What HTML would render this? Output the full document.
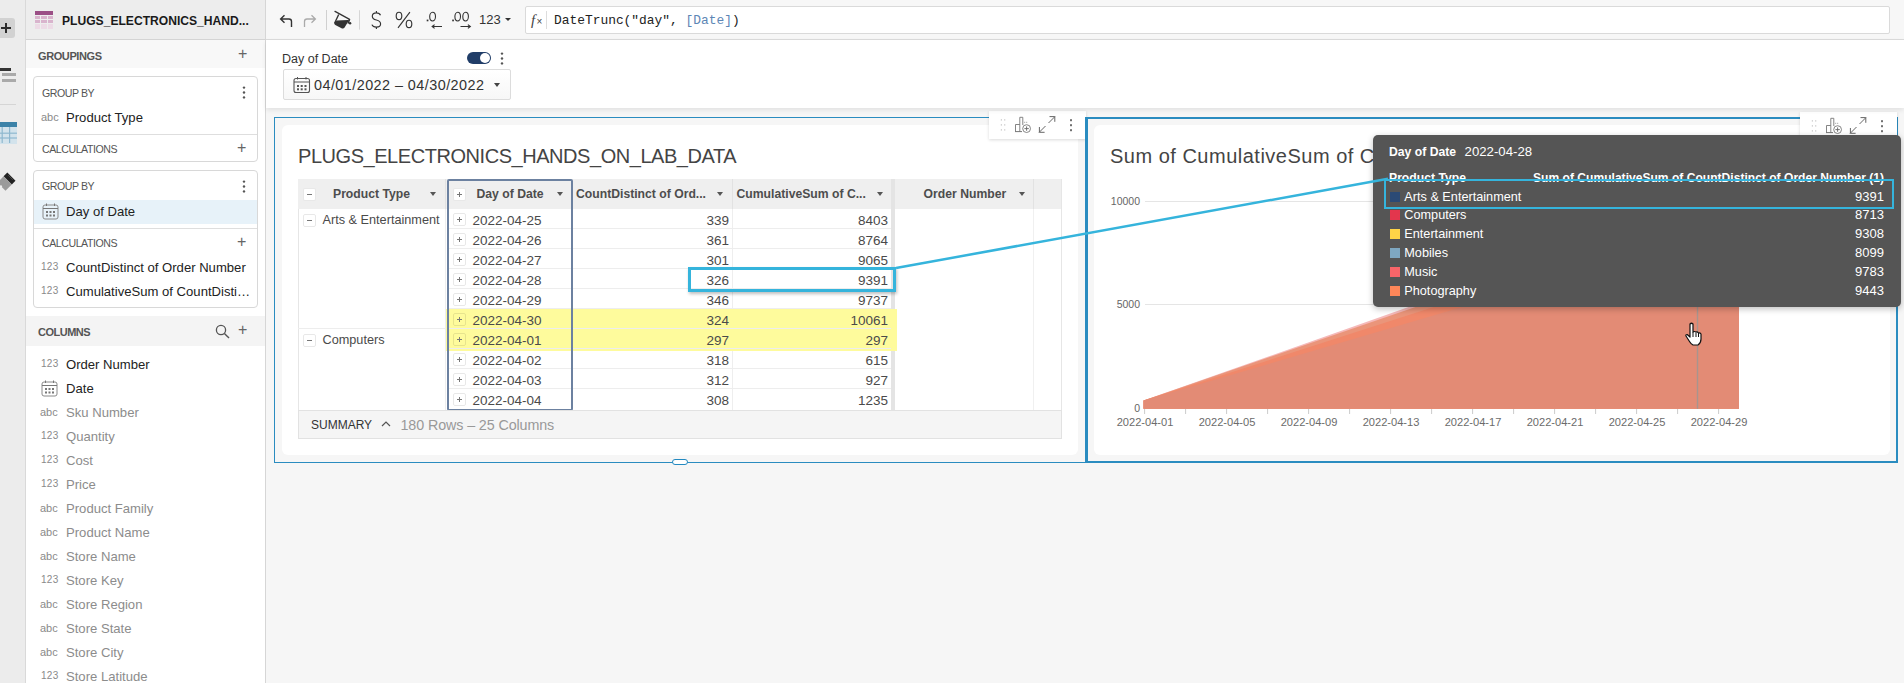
<!DOCTYPE html>
<html><head><meta charset="utf-8">
<style>
*{box-sizing:border-box;margin:0;padding:0}
html,body{width:1904px;height:683px;overflow:hidden;background:#f6f6f6;font-family:"Liberation Sans",sans-serif;color:#333}
.a{position:absolute;white-space:nowrap}
.t{position:absolute;white-space:nowrap;line-height:20px;height:20px}
#nav{position:absolute;left:0;top:0;width:26px;height:683px;background:#ececec;border-right:1px solid #d9d9d9}
#panel{position:absolute;left:26px;top:0;width:240px;height:683px;background:#fff;border-right:1px solid #d6d6d6}
#phead{position:absolute;left:0;top:0;width:239px;height:40px;background:#ededed;border-bottom:1px solid #d4d4d4}
.sechead{position:absolute;left:0;width:239px;background:#f8f8f8}
.card{position:absolute;left:7px;width:225px;border:1px solid #d8d8d8;border-radius:4px;background:#fff;overflow:hidden}
.lbl{font-size:10.6px;color:#555;letter-spacing:-0.45px}
.ptxt{font-size:13.1px;color:#222}
.ico123{font-size:10px;color:#8a8a8a;letter-spacing:0.3px}
.icoabc{font-size:11px;color:#8a8a8a}
.gray{color:#8c8c8c}
#main{position:absolute;left:266px;top:0;width:1638px;height:683px;background:#f6f6f6}
#tb{position:absolute;left:0;top:0;width:1638px;height:40px;background:#f7f7f7;border-bottom:1px solid #dcdcdc}
#ctl{position:absolute;left:0;top:40px;width:1638px;height:68px;background:#fff;box-shadow:0 2px 5px rgba(0,0,0,0.09)}

.kebab{width:3px;height:13px;background:radial-gradient(circle at 1.5px 1.5px,#555 1.2px,transparent 1.5px) 0 0/3px 5px repeat-y}
.cal{width:17px;height:17px}

.elb{position:absolute;background:#f6f6f6}
.card2{position:absolute;background:#fff;border-radius:6px}
.hdr{position:absolute;top:179px;height:30px;background:#efefef}
.htxt{font-size:12.2px;font-weight:bold;color:#4d4d4d}
.caret{position:absolute;width:0;height:0;border-left:3.5px solid transparent;border-right:3.5px solid transparent;border-top:4.5px solid #555;margin-left:0.5px}
.cell{font-size:13.5px;color:#4a4a4a}
.pbox{position:absolute;width:13px;height:13px;border:1px solid rgba(0,0,0,0.09);border-radius:2px;background:transparent}
.pbox:before{content:"";position:absolute;left:3px;top:5px;width:5px;height:1px;background:#777}
.pbox.p:after{content:"";position:absolute;left:5px;top:3px;width:1px;height:5px;background:#777}
.hl{position:absolute;height:1px;background:#ededed}
.vl{position:absolute;width:1px;background:#e6e6e6}
</style></head><body>
<div id="nav">
  <div class="a" style="left:-4px;top:18px;width:19px;height:20px;background:#d2d2d2;border-radius:3px"></div>
  <div class="a" style="left:1px;top:27px;width:10px;height:2px;background:#2b2b2b"></div>
  <div class="a" style="left:5px;top:23px;width:2px;height:10px;background:#2b2b2b"></div>
  <div class="a" style="left:0;top:68px;width:11px;height:3px;background:#333"></div>
  <div class="a" style="left:2px;top:73px;width:14px;height:3px;background:#aaa"></div>
  <div class="a" style="left:2px;top:79px;width:14px;height:3px;background:#aaa"></div>
  <div class="a" style="left:0;top:104px;width:16px;height:1px;background:#d5d5d5"></div>
  <svg class="a" style="left:0;top:122px" width="17" height="22" viewBox="0 0 17 22">
    <rect x="0" y="0" width="17" height="22" fill="#d3e3ec"/>
    <rect x="0" y="0" width="17" height="5" fill="#3b82a8"/>
    <rect x="1.6" y="5" width="1.2" height="16" fill="#8fb8cf"/><rect x="9" y="5" width="1.2" height="16" fill="#8fb8cf"/>
    <rect x="0" y="10.6" width="17" height="1.2" fill="#8fb8cf"/><rect x="0" y="15.4" width="17" height="1.2" fill="#8fb8cf"/>
  </svg>
  <svg class="a" style="left:0;top:170px" width="17" height="22" viewBox="0 0 17 22">
    <path d="M7.3 2.6 L15.5 10.8 L11.8 14.5 L3.6 6.3 Z" fill="#222"/>
    <path d="M8.2 5.2 L12.8 9.8" stroke="#555" stroke-width="0.8"/>
    <path d="M3.6 6.3 L11.8 14.5 L5.5 20.8 L-2.7 12.6 Z" fill="#9a9a9a"/>
    <circle cx="0.8" cy="16.6" r="1.3" fill="#ececec"/>
  </svg>
</div>
<div id="panel">
  <div id="phead">
    <svg class="a" style="left:9px;top:11px" width="18" height="18" viewBox="0 0 18 18">
      <rect x="0" y="0" width="18" height="4" fill="#9b4f86"/>
      <g fill="#d9b4cd"><rect x="0" y="5" width="5" height="3"/><rect x="6" y="5" width="6" height="3"/><rect x="13" y="5" width="5" height="3"/>
      <rect x="0" y="9" width="5" height="3"/><rect x="6" y="9" width="6" height="3"/><rect x="13" y="9" width="5" height="3"/></g>
      <g fill="#eddbe6"><rect x="0" y="13" width="5" height="5"/><rect x="6" y="13" width="6" height="5"/><rect x="13" y="13" width="5" height="5"/></g>
    </svg>
    <div class="t" style="left:36px;top:10.6px;font-size:12.1px;font-weight:bold;color:#1a1a1a">PLUGS_ELECTRONICS_HAND...</div>
  </div>
  <div class="sechead" style="top:40px;height:28px">
    <div class="t" style="left:12px;top:5.5px;font-size:11px;font-weight:bold;color:#555;letter-spacing:-0.4px">GROUPINGS</div>
    <div class="t plus" style="left:212px;top:4px;font-size:16px;color:#666">+</div>
  </div>
  <div class="card" style="top:76px;height:86px">
    <div class="t lbl" style="left:8px;top:6.3px">GROUP BY</div>
    <svg class="a" style="left:208px;top:9px" width="4" height="13" viewBox="0 0 4 13"><circle cx="2" cy="1.6" r="1.2" fill="#555"/><circle cx="2" cy="6.5" r="1.2" fill="#555"/><circle cx="2" cy="11.4" r="1.2" fill="#555"/></svg>
    <div class="t icoabc" style="left:7px;top:30.4px">abc</div>
    <div class="t ptxt" style="left:32px;top:31.4px">Product Type</div>
    <div style="position:absolute;left:0;top:57px;width:223px;height:1px;background:#dedede"></div>
    <div class="t lbl" style="left:8px;top:62px">CALCULATIONS</div>
    <div class="t" style="left:203px;top:61px;font-size:16px;color:#666">+</div>
  </div>
  <div class="card" style="top:170px;height:138px">
    <div class="t lbl" style="left:8px;top:5.3px">GROUP BY</div>
    <svg class="a" style="left:208px;top:9px" width="4" height="13" viewBox="0 0 4 13"><circle cx="2" cy="1.6" r="1.2" fill="#555"/><circle cx="2" cy="6.5" r="1.2" fill="#555"/><circle cx="2" cy="11.4" r="1.2" fill="#555"/></svg>
    <div style="position:absolute;left:0;top:29px;width:223px;height:24px;background:#e7f2f9"></div>
    <div class="a cal" style="left:8px;top:32px"><svg width="17" height="17" viewBox="0 0 17 17"><rect x="1" y="2" width="15" height="14" rx="2" fill="none" stroke="#8a8a8a" stroke-width="1"/><line x1="1" y1="5.5" x2="16" y2="5.5" stroke="#777"/><line x1="4.5" y1="0.5" x2="4.5" y2="3" stroke="#777"/><line x1="12.5" y1="0.5" x2="12.5" y2="3" stroke="#777"/><g fill="#777"><rect x="4" y="8" width="2" height="2"/><rect x="7.5" y="8" width="2" height="2"/><rect x="11" y="8" width="2" height="2"/><rect x="4" y="11.5" width="2" height="2"/><rect x="7.5" y="11.5" width="2" height="2"/><rect x="11" y="11.5" width="2" height="2"/></g></svg></div>
    <div class="t ptxt" style="left:32px;top:31px">Day of Date</div>
    <div style="position:absolute;left:0;top:57px;width:223px;height:1px;background:#dedede"></div>
    <div class="t lbl" style="left:8px;top:62px">CALCULATIONS</div>
    <div class="t" style="left:203px;top:61px;font-size:16px;color:#666">+</div>
    <div class="t ico123" style="left:7px;top:86px">123</div>
    <div class="t ptxt" style="left:32px;top:87px">CountDistinct of Order Number</div>
    <div class="t ico123" style="left:7px;top:110px">123</div>
    <div class="t ptxt" style="left:32px;top:111px">CumulativeSum of CountDisti…</div>
  </div>
  <div class="sechead" style="top:316px;height:30px;background:#f4f4f4">
    <div class="t" style="left:12px;top:5.5px;font-size:11px;font-weight:bold;color:#555;letter-spacing:-0.5px">COLUMNS</div>
    <svg class="a" style="left:189px;top:8px" width="16" height="16" viewBox="0 0 16 16"><circle cx="6" cy="6" r="4.6" fill="none" stroke="#555" stroke-width="1.3"/><line x1="9.4" y1="9.4" x2="14" y2="14" stroke="#555" stroke-width="1.4"/></svg>
    <div class="t" style="left:212px;top:4px;font-size:16px;color:#666">+</div>
  </div>
  <div class="t ico123" style="left:15px;top:354px">123</div>
  <div class="t ptxt" style="left:40px;top:355px;color:#222">Order Number</div>
  <div class="a cal" style="left:15px;top:380px"><svg width="17" height="17" viewBox="0 0 17 17"><rect x="1" y="2" width="15" height="14" rx="2" fill="none" stroke="#8a8a8a" stroke-width="1"/><line x1="1" y1="5.5" x2="16" y2="5.5" stroke="#777"/><line x1="4.5" y1="0.5" x2="4.5" y2="3" stroke="#777"/><line x1="12.5" y1="0.5" x2="12.5" y2="3" stroke="#777"/><g fill="#777"><rect x="4" y="8" width="2" height="2"/><rect x="7.5" y="8" width="2" height="2"/><rect x="11" y="8" width="2" height="2"/><rect x="4" y="11.5" width="2" height="2"/><rect x="7.5" y="11.5" width="2" height="2"/><rect x="11" y="11.5" width="2" height="2"/></g></svg></div>
  <div class="t ptxt" style="left:40px;top:379px;color:#222">Date</div>
  <div class="t icoabc" style="left:14px;top:402px">abc</div>
  <div class="t ptxt" style="left:40px;top:403px;color:#8c8c8c">Sku Number</div>
  <div class="t ico123" style="left:15px;top:426px">123</div>
  <div class="t ptxt" style="left:40px;top:427px;color:#8c8c8c">Quantity</div>
  <div class="t ico123" style="left:15px;top:450px">123</div>
  <div class="t ptxt" style="left:40px;top:451px;color:#8c8c8c">Cost</div>
  <div class="t ico123" style="left:15px;top:474px">123</div>
  <div class="t ptxt" style="left:40px;top:475px;color:#8c8c8c">Price</div>
  <div class="t icoabc" style="left:14px;top:498px">abc</div>
  <div class="t ptxt" style="left:40px;top:499px;color:#8c8c8c">Product Family</div>
  <div class="t icoabc" style="left:14px;top:522px">abc</div>
  <div class="t ptxt" style="left:40px;top:523px;color:#8c8c8c">Product Name</div>
  <div class="t icoabc" style="left:14px;top:546px">abc</div>
  <div class="t ptxt" style="left:40px;top:547px;color:#8c8c8c">Store Name</div>
  <div class="t ico123" style="left:15px;top:570px">123</div>
  <div class="t ptxt" style="left:40px;top:571px;color:#8c8c8c">Store Key</div>
  <div class="t icoabc" style="left:14px;top:594px">abc</div>
  <div class="t ptxt" style="left:40px;top:595px;color:#8c8c8c">Store Region</div>
  <div class="t icoabc" style="left:14px;top:618px">abc</div>
  <div class="t ptxt" style="left:40px;top:619px;color:#8c8c8c">Store State</div>
  <div class="t icoabc" style="left:14px;top:642px">abc</div>
  <div class="t ptxt" style="left:40px;top:643px;color:#8c8c8c">Store City</div>
  <div class="t ico123" style="left:15px;top:666px">123</div>
  <div class="t ptxt" style="left:40px;top:667px;color:#8c8c8c">Store Latitude</div>
</div>
<div id="main">
  <div id="tb">
    <svg class="a" style="left:13px;top:13px" width="14" height="15" viewBox="0 0 14 15"><path d="M12.5 14 V8.5 Q12.5 6 10 6 H2 M5.5 2.2 L1.6 6 L5.5 9.8" fill="none" stroke="#333" stroke-width="1.4"/></svg>
    <svg class="a" style="left:37px;top:13px" width="14" height="15" viewBox="0 0 14 15"><path d="M1.5 14 V8.5 Q1.5 6 4 6 H12 M8.5 2.2 L12.4 6 L8.5 9.8" fill="none" stroke="#aaa" stroke-width="1.3"/></svg>
    <div class="a" style="left:60px;top:10px;width:1px;height:20px;background:#d0d0d0"></div>
    <svg class="a" style="left:64px;top:5px" width="90" height="30" viewBox="0 0 90 30">
      <path d="M5 6.4 L19.6 14.4" stroke="#333" stroke-width="1.3" stroke-linecap="round"/>
      <path d="M8.7 9.5 L4.6 18.2" stroke="#333" stroke-width="1.4"/>
      <path d="M6.9 15.6 L18 14.9 L19.4 14.6 L14.6 22.6 Q13.5 24 12 23.4 L5.3 20 Q3.8 19 4.4 17.8 Z" fill="#333"/>
      <path d="M19.6 14.4 L18 18.5" stroke="#333" stroke-width="1.4"/>
      <circle cx="20.1" cy="18.3" r="1.2" fill="#333"/>
      <rect x="29" y="5.2" width="1" height="19.4" fill="#d6d6d6"/>
      <path d="M50.5 10.3 Q49.5 7.8 46.4 7.8 Q42.3 7.8 42.3 11.2 Q42.3 14 46.4 15 Q50.6 16 50.6 19 Q50.6 22.1 46.4 22.1 Q42.9 22.1 41.9 19.6 M46.4 6 V7.8 M46.4 22.1 V23.9" fill="none" stroke="#333" stroke-width="1.15"/>
      <ellipse cx="69" cy="10.9" rx="2.8" ry="3.7" fill="none" stroke="#333" stroke-width="1.15"/>
      <ellipse cx="79" cy="18.9" rx="2.8" ry="3.7" fill="none" stroke="#333" stroke-width="1.15"/>
      <path d="M79.9 7.1 L68 22.9" stroke="#333" stroke-width="1.15"/>
    </svg>
    <svg class="a" style="left:160px;top:11px" width="17" height="19" viewBox="0 0 17 19"><rect x="0.7" y="8.6" width="1.7" height="1.7" fill="#333"/><ellipse cx="6.6" cy="5.6" rx="2.9" ry="4.4" fill="none" stroke="#333" stroke-width="1.1"/><path d="M16 15.5 H6.5 M8.6 13.6 L6.2 15.5 L8.6 17.4" fill="none" stroke="#333" stroke-width="1.2"/></svg>
    <svg class="a" style="left:185px;top:11px" width="21" height="19" viewBox="0 0 21 19"><rect x="1.2" y="8.6" width="1.7" height="1.7" fill="#333"/><ellipse cx="6.7" cy="5.6" rx="2.8" ry="4.4" fill="none" stroke="#333" stroke-width="1.1"/><ellipse cx="14.6" cy="5.6" rx="2.8" ry="4.4" fill="none" stroke="#333" stroke-width="1.1"/><path d="M9.5 15.5 H19 M16.9 13.6 L19.3 15.5 L16.9 17.4" fill="none" stroke="#333" stroke-width="1.2"/></svg>
    <div class="t" style="left:213px;top:10px;font-size:13px;color:#333">123</div>
    <div class="a" style="left:239px;top:18px;width:0;height:0;border-left:3.5px solid transparent;border-right:3.5px solid transparent;border-top:3.5px solid #333"></div>
    <div class="a" style="left:259px;top:6px;width:1365px;height:28px;background:#fff;border:1px solid #dadada;border-radius:2px">
      <div class="t" style="left:5px;top:3px;font-family:'Liberation Serif',serif;font-style:italic;font-size:15px;color:#444">f</div>
      <div class="t" style="left:10.5px;top:5px;font-size:10px;color:#444">×</div>
      <div class="a" style="left:20px;top:4px;width:1px;height:18px;background:#ddd"></div>
      <div class="t" style="left:28px;top:3.5px;font-family:'Liberation Mono',monospace;font-size:12.9px;color:#222">DateTrunc("day", <span style="color:#5d86b5">[Date]</span>)</div>
    </div>
  </div>
  <div class="elb" style="left:8px;top:117px;width:812px;height:346px;border:1px solid #2a8cc0"></div>
  <div class="card2" style="left:16px;top:125px;width:796px;height:330px"></div>
  <div class="t" style="left:32px;top:145.6px;font-size:20px;color:#444;letter-spacing:-0.45px">PLUGS_ELECTRONICS_HANDS_ON_LAB_DATA</div>
  <div class="hdr" style="left:32px;width:764px"></div>
  <div class="vl" style="left:179px;top:179px;height:30px;background:#e2e2e2"></div>
  <div class="vl" style="left:466px;top:179px;height:30px;background:#e2e2e2"></div>
  <div class="vl" style="left:767px;top:179px;height:30px;background:#e2e2e2"></div>
  <div class="a" style="left:625px;top:179px;width:4px;height:231px;background:#e4e4e4"></div>
  <div class="pbox" style="left:37px;top:188px;background:#fff;width:12.5px;height:12.5px"></div>
  <div class="t htxt" style="left:67px;top:184px">Product Type</div>
  <div class="caret" style="left:163px;top:192px"></div>
  <div class="pbox p" style="left:187px;top:188px;background:#fff;width:12.5px;height:12.5px"></div>
  <div class="t htxt" style="left:210.5px;top:184px">Day of Date</div>
  <div class="caret" style="left:290px;top:192px"></div>
  <div class="t htxt" style="left:310px;top:184px">CountDistinct of Ord...</div>
  <div class="caret" style="left:450px;top:192px"></div>
  <div class="t htxt" style="left:470.5px;top:184px">CumulativeSum of C...</div>
  <div class="caret" style="left:610px;top:192px"></div>
  <div class="t htxt" style="left:657.6px;top:184px">Order Number</div>
  <div class="caret" style="left:752px;top:192px"></div>
  <div class="vl" style="left:32px;top:209px;height:229px"></div>
  <div class="vl" style="left:179px;top:209px;height:201px;background:#eee"></div>
  <div class="vl" style="left:466px;top:209px;height:201px;background:#eee"></div>
  <div class="vl" style="left:767px;top:209px;height:201px;background:#f0f0f0"></div>
  <div class="vl" style="left:795px;top:179px;height:259px;background:#e6e6e6"></div>
    <div class="a" style="left:180px;top:309px;width:451px;height:42px;background:#fefb9c"></div>
  <div class="pbox p" style="left:187px;top:212.5px"></div>
  <div class="t cell" style="left:206.39999999999998px;top:211px">2022-04-25</div>
  <div class="t cell" style="left:307px;width:156px;text-align:right;top:211px">339</div>
  <div class="t cell" style="left:467px;width:155px;text-align:right;top:211px">8403</div>
  <div class="hl" style="left:182px;top:228px;width:443px"></div>
  <div class="pbox p" style="left:187px;top:232.5px"></div>
  <div class="t cell" style="left:206.39999999999998px;top:231px">2022-04-26</div>
  <div class="t cell" style="left:307px;width:156px;text-align:right;top:231px">361</div>
  <div class="t cell" style="left:467px;width:155px;text-align:right;top:231px">8764</div>
  <div class="hl" style="left:182px;top:248px;width:443px"></div>
  <div class="pbox p" style="left:187px;top:252.5px"></div>
  <div class="t cell" style="left:206.39999999999998px;top:251px">2022-04-27</div>
  <div class="t cell" style="left:307px;width:156px;text-align:right;top:251px">301</div>
  <div class="t cell" style="left:467px;width:155px;text-align:right;top:251px">9065</div>
  <div class="hl" style="left:182px;top:268px;width:443px"></div>
  <div class="pbox p" style="left:187px;top:272.5px"></div>
  <div class="t cell" style="left:206.39999999999998px;top:271px">2022-04-28</div>
  <div class="t cell" style="left:307px;width:156px;text-align:right;top:271px">326</div>
  <div class="t cell" style="left:467px;width:155px;text-align:right;top:271px">9391</div>
  <div class="hl" style="left:182px;top:288px;width:443px"></div>
  <div class="pbox p" style="left:187px;top:292.5px"></div>
  <div class="t cell" style="left:206.39999999999998px;top:291px">2022-04-29</div>
  <div class="t cell" style="left:307px;width:156px;text-align:right;top:291px">346</div>
  <div class="t cell" style="left:467px;width:155px;text-align:right;top:291px">9737</div>
  <div class="hl" style="left:182px;top:308px;width:443px"></div>
  <div class="pbox p" style="left:187px;top:312.5px"></div>
  <div class="t cell" style="left:206.39999999999998px;top:311px">2022-04-30</div>
  <div class="t cell" style="left:307px;width:156px;text-align:right;top:311px">324</div>
  <div class="t cell" style="left:467px;width:155px;text-align:right;top:311px">10061</div>
  <div class="hl" style="left:182px;top:328px;width:443px"></div>
  <div class="pbox p" style="left:187px;top:332.5px"></div>
  <div class="t cell" style="left:206.39999999999998px;top:331px">2022-04-01</div>
  <div class="t cell" style="left:307px;width:156px;text-align:right;top:331px">297</div>
  <div class="t cell" style="left:467px;width:155px;text-align:right;top:331px">297</div>
  <div class="hl" style="left:182px;top:348px;width:443px"></div>
  <div class="pbox p" style="left:187px;top:352.5px"></div>
  <div class="t cell" style="left:206.39999999999998px;top:351px">2022-04-02</div>
  <div class="t cell" style="left:307px;width:156px;text-align:right;top:351px">318</div>
  <div class="t cell" style="left:467px;width:155px;text-align:right;top:351px">615</div>
  <div class="hl" style="left:182px;top:368px;width:443px"></div>
  <div class="pbox p" style="left:187px;top:372.5px"></div>
  <div class="t cell" style="left:206.39999999999998px;top:371px">2022-04-03</div>
  <div class="t cell" style="left:307px;width:156px;text-align:right;top:371px">312</div>
  <div class="t cell" style="left:467px;width:155px;text-align:right;top:371px">927</div>
  <div class="hl" style="left:182px;top:388px;width:443px"></div>
  <div class="pbox p" style="left:187px;top:392.5px"></div>
  <div class="t cell" style="left:206.39999999999998px;top:391px">2022-04-04</div>
  <div class="t cell" style="left:307px;width:156px;text-align:right;top:391px">308</div>
  <div class="t cell" style="left:467px;width:155px;text-align:right;top:391px">1235</div>
  <div class="hl" style="left:32px;top:328px;width:147px"></div>
  <div class="pbox" style="left:37px;top:213.5px"></div>
  <div class="t cell" style="left:56.5px;top:210px;font-size:12.7px">Arts &amp; Entertainment</div>
  <div class="pbox" style="left:37px;top:333.5px"></div>
  <div class="t cell" style="left:56.5px;top:330px;font-size:12.7px">Computers</div>
  <div class="a" style="left:181px;top:179px;width:126px;height:232px;border:2px solid #6c81a0;border-radius:2px"></div>
  <div class="a" style="left:32px;top:410px;width:764px;height:29px;background:#f5f5f5;border:1px solid #e2e2e2"></div>
  <div class="t" style="left:45px;top:414.8px;font-size:12px;color:#333">SUMMARY</div>
  <svg class="a" style="left:115px;top:420px" width="10" height="7" viewBox="0 0 10 7"><path d="M1 6 L5 2 L9 6" fill="none" stroke="#555" stroke-width="1.2"/></svg>
  <div class="t" style="left:134.5px;top:414.8px;font-size:14.3px;color:#999;letter-spacing:-0.1px">180 Rows – 25 Columns</div>
  <div class="a" style="left:406px;top:459px;width:16px;height:6px;border:1px solid #2389c0;border-radius:3px;background:#fff"></div>
  <div class="a" style="left:723px;top:111px;width:97px;height:28px;background:#fff;box-shadow:0 1px 3px rgba(0,0,0,0.15)"><svg class="a" style="left:0;top:0" width="97" height="28" viewBox="0 0 97 28"><g fill="#c4c4c4"><rect x="11.8" y="8.3" width="1.2" height="1.2"/><rect x="15.1" y="8.3" width="1.2" height="1.2"/><rect x="11.8" y="13.3" width="1.2" height="1.2"/><rect x="15.1" y="13.3" width="1.2" height="1.2"/><rect x="11.8" y="18.3" width="1.2" height="1.2"/><rect x="15.1" y="18.3" width="1.2" height="1.2"/></g><path d="M26.5 20.6 V13.5 H30.8 M30.8 20.6 V6.3 H33.8 V14" fill="none" stroke="#777" stroke-width="0.9"/><path d="M26 20.6 H33" stroke="#777" stroke-width="1"/><circle cx="37.6" cy="17.6" r="3.9" fill="#fff" stroke="#777" stroke-width="0.9"/><path d="M37.6 15.4 V19.8 M35.4 17.6 H39.8" stroke="#666" stroke-width="0.9"/><g fill="#999"><rect x="35.2" y="10.8" width="1" height="1"/><rect x="37.2" y="10.8" width="1" height="1"/></g><path d="M50 21.5 L56.5 15 M50.4 16 V21.3 H55.6 M59.5 12 L66 5.5 M60.5 5.6 H65.8 V10.8" fill="none" stroke="#666" stroke-width="1"/><g fill="#707070"><rect x="81" y="8.2" width="2" height="2"/><rect x="81" y="13.2" width="2" height="2"/><rect x="81" y="18.2" width="2" height="2"/></g></svg></div>
  <div class="elb" style="left:819px;top:117px;width:813px;height:346px;border:2px solid #2a8cc0;border-left-width:3px"></div>
  <div class="card2" style="left:828px;top:125px;width:796px;height:330px"></div>
  <div class="t" style="left:844px;top:145.6px;font-size:20px;color:#444;letter-spacing:0.5px">Sum of CumulativeSum of CountDistinct of Order Number</div>
  <div class="a" style="left:1534px;top:112px;width:97px;height:28px;background:#fff;box-shadow:0 1px 3px rgba(0,0,0,0.15)"><svg class="a" style="left:0;top:0" width="97" height="28" viewBox="0 0 97 28"><g fill="#c4c4c4"><rect x="11.8" y="8.3" width="1.2" height="1.2"/><rect x="15.1" y="8.3" width="1.2" height="1.2"/><rect x="11.8" y="13.3" width="1.2" height="1.2"/><rect x="15.1" y="13.3" width="1.2" height="1.2"/><rect x="11.8" y="18.3" width="1.2" height="1.2"/><rect x="15.1" y="18.3" width="1.2" height="1.2"/></g><path d="M26.5 20.6 V13.5 H30.8 M30.8 20.6 V6.3 H33.8 V14" fill="none" stroke="#777" stroke-width="0.9"/><path d="M26 20.6 H33" stroke="#777" stroke-width="1"/><circle cx="37.6" cy="17.6" r="3.9" fill="#fff" stroke="#777" stroke-width="0.9"/><path d="M37.6 15.4 V19.8 M35.4 17.6 H39.8" stroke="#666" stroke-width="0.9"/><g fill="#999"><rect x="35.2" y="10.8" width="1" height="1"/><rect x="37.2" y="10.8" width="1" height="1"/></g><path d="M50 21.5 L56.5 15 M50.4 16 V21.3 H55.6 M59.5 12 L66 5.5 M60.5 5.6 H65.8 V10.8" fill="none" stroke="#666" stroke-width="1"/><g fill="#707070"><rect x="81" y="8.2" width="2" height="2"/><rect x="81" y="13.2" width="2" height="2"/><rect x="81" y="18.2" width="2" height="2"/></g></svg></div>
  <div class="t" style="left:774px;width:100px;text-align:right;top:190.9px;font-size:10.5px;color:#666">10000</div>
  <div class="t" style="left:774px;width:100px;text-align:right;top:294.1px;font-size:10.5px;color:#666">5000</div>
  <div class="t" style="left:774px;width:100px;text-align:right;top:397.6px;font-size:10.5px;color:#666">0</div>
  <div class="a" style="left:879px;top:200.5px;width:595px;height:1px;background:#e5e5e5"></div>
  <div class="a" style="left:879px;top:303.5px;width:595px;height:1px;background:#e5e5e5"></div>
  <svg class="a" style="left:874px;top:190px" width="620" height="240" viewBox="0 0 620 240"><polygon points="3.5,210.6 599.0,0.1 599.0,218.8 3.5,218.8" fill="#f5b9b9"/><polygon points="3.5,210.6 599.0,5.6 599.0,218.8 3.5,218.8" fill="#ea957a"/><polygon points="3.5,210.6 599.0,18.4 599.0,218.8 3.5,218.8" fill="#f0886a"/><polygon points="3.5,210.6 599.0,35.8 599.0,218.8 3.5,218.8" fill="#e38b75"/><line x1="4.6" y1="219" x2="4.6" y2="224" stroke="#ccc" stroke-width="1"/><line x1="45.6" y1="219" x2="45.6" y2="224" stroke="#ccc" stroke-width="1"/><line x1="86.6" y1="219" x2="86.6" y2="224" stroke="#ccc" stroke-width="1"/><line x1="127.6" y1="219" x2="127.6" y2="224" stroke="#ccc" stroke-width="1"/><line x1="168.6" y1="219" x2="168.6" y2="224" stroke="#ccc" stroke-width="1"/><line x1="209.6" y1="219" x2="209.6" y2="224" stroke="#ccc" stroke-width="1"/><line x1="250.6" y1="219" x2="250.6" y2="224" stroke="#ccc" stroke-width="1"/><line x1="291.6" y1="219" x2="291.6" y2="224" stroke="#ccc" stroke-width="1"/><line x1="332.6" y1="219" x2="332.6" y2="224" stroke="#ccc" stroke-width="1"/><line x1="373.6" y1="219" x2="373.6" y2="224" stroke="#ccc" stroke-width="1"/><line x1="414.6" y1="219" x2="414.6" y2="224" stroke="#ccc" stroke-width="1"/><line x1="455.6" y1="219" x2="455.6" y2="224" stroke="#ccc" stroke-width="1"/><line x1="496.6" y1="219" x2="496.6" y2="224" stroke="#ccc" stroke-width="1"/><line x1="537.6" y1="219" x2="537.6" y2="224" stroke="#ccc" stroke-width="1"/><line x1="578.6" y1="219" x2="578.6" y2="224" stroke="#ccc" stroke-width="1"/><line x1="557.5" y1="10" x2="557.5" y2="218.8" stroke="#a8948e" stroke-width="1.4"/></svg>
  <div class="t" style="left:839px;width:80px;text-align:center;top:411.7px;font-size:11.1px;color:#6b6b6b">2022-04-01</div>
  <div class="t" style="left:921px;width:80px;text-align:center;top:411.7px;font-size:11.1px;color:#6b6b6b">2022-04-05</div>
  <div class="t" style="left:1003px;width:80px;text-align:center;top:411.7px;font-size:11.1px;color:#6b6b6b">2022-04-09</div>
  <div class="t" style="left:1085px;width:80px;text-align:center;top:411.7px;font-size:11.1px;color:#6b6b6b">2022-04-13</div>
  <div class="t" style="left:1167px;width:80px;text-align:center;top:411.7px;font-size:11.1px;color:#6b6b6b">2022-04-17</div>
  <div class="t" style="left:1249px;width:80px;text-align:center;top:411.7px;font-size:11.1px;color:#6b6b6b">2022-04-21</div>
  <div class="t" style="left:1331px;width:80px;text-align:center;top:411.7px;font-size:11.1px;color:#6b6b6b">2022-04-25</div>
  <div class="t" style="left:1413px;width:80px;text-align:center;top:411.7px;font-size:11.1px;color:#6b6b6b">2022-04-29</div>
  <div class="a" style="left:422px;top:266.5px;width:208px;height:25px;border:3px solid #35b4dc;box-shadow:1px 2px 3px rgba(0,0,0,0.25)"></div>
  <div class="a" style="left:1107px;top:135px;width:528px;height:171.5px;background:#555;border-radius:5px;box-shadow:0 2px 6px rgba(0,0,0,0.25)"><div class="t" style="left:16px;top:6.800000000000011px;font-size:12.2px;font-weight:bold;color:#fff">Day of Date</div><div class="t" style="left:91.59999999999991px;top:6.800000000000011px;font-size:13.2px;color:#fff">2022-04-28</div><div class="t" style="left:16px;top:33px;font-size:12.2px;font-weight:bold;color:#fff">Product Type</div><div class="t" style="left:-73px;width:584px;text-align:right;top:33px;font-size:12.08px;font-weight:bold;color:#fff">Sum of CumulativeSum of CountDistinct of Order Number (1)</div><div class="a" style="left:17px;top:56.69999999999999px;width:10px;height:10px;background:#2b4a75"></div><div class="t" style="left:31.299999999999955px;top:51.69999999999999px;font-size:12.7px;color:#fff">Arts &amp; Entertainment</div><div class="t" style="left:-73px;width:584px;text-align:right;top:51.69999999999999px;font-size:13px;color:#fff">9391</div><div class="a" style="left:17px;top:74.80000000000001px;width:10px;height:10px;background:#e3364d"></div><div class="t" style="left:31.299999999999955px;top:69.80000000000001px;font-size:12.7px;color:#fff">Computers</div><div class="t" style="left:-73px;width:584px;text-align:right;top:69.80000000000001px;font-size:13px;color:#fff">8713</div><div class="a" style="left:17px;top:93.6px;width:10px;height:10px;background:#fed447"></div><div class="t" style="left:31.299999999999955px;top:88.6px;font-size:12.7px;color:#fff">Entertainment</div><div class="t" style="left:-73px;width:584px;text-align:right;top:88.6px;font-size:13px;color:#fff">9308</div><div class="a" style="left:17px;top:112.6px;width:10px;height:10px;background:#7ea7c1"></div><div class="t" style="left:31.299999999999955px;top:107.6px;font-size:12.7px;color:#fff">Mobiles</div><div class="t" style="left:-73px;width:584px;text-align:right;top:107.6px;font-size:13px;color:#fff">8099</div><div class="a" style="left:17px;top:131.7px;width:10px;height:10px;background:#f86569"></div><div class="t" style="left:31.299999999999955px;top:126.69999999999999px;font-size:12.7px;color:#fff">Music</div><div class="t" style="left:-73px;width:584px;text-align:right;top:126.69999999999999px;font-size:13px;color:#fff">9783</div><div class="a" style="left:17px;top:150.7px;width:10px;height:10px;background:#fe8759"></div><div class="t" style="left:31.299999999999955px;top:145.7px;font-size:12.7px;color:#fff">Photography</div><div class="t" style="left:-73px;width:584px;text-align:right;top:145.7px;font-size:13px;color:#fff">9443</div></div>
  <div class="a" style="left:1118px;top:178.5px;width:510px;height:30.5px;border:2.7px solid #35b4dc"></div>
  <svg class="a" style="left:614px;top:170px" width="520" height="110" viewBox="0 0 520 110"><line x1="16" y1="98" x2="508" y2="8.8" stroke="#35b4dc" stroke-width="2.5"/></svg>
  <svg class="a" style="left:1418px;top:322px" width="20" height="24" viewBox="0 0 20 24"><path d="M6 2 Q7.5 0.5 9 2 V10 Q10.5 9 12 10 Q13.5 9.5 14.5 11 Q16 10.5 17 12 V17 Q17 21 14 23 H9 Q7 22 5.5 19.5 L2 14 Q1.5 12.5 3.2 12.5 L6 15 Z" fill="#fff" stroke="#111" stroke-width="1.2" stroke-linejoin="round"/><path d="M9 10 V15 M12 10.5 V15 M14.5 11 V15" stroke="#111" stroke-width="1"/></svg>
  <div id="ctl">
    <div class="t" style="left:16px;top:8.8px;font-size:12.5px;color:#333">Day of Date</div>
    <div class="a" style="left:201px;top:12px;width:24px;height:12px;border-radius:6px;background:#203d68"></div>
    <div class="a" style="left:214px;top:13px;width:10px;height:10px;border-radius:5px;background:#fff"></div>
    <svg class="a" style="left:234px;top:12px" width="4" height="13" viewBox="0 0 4 13"><circle cx="2" cy="1.6" r="1.2" fill="#555"/><circle cx="2" cy="6.5" r="1.2" fill="#555"/><circle cx="2" cy="11.4" r="1.2" fill="#555"/></svg>
    <div class="a" style="left:16.5px;top:28.5px;width:228.5px;height:31px;border:1px solid #dcdcdc;border-radius:2px;background:linear-gradient(#fff,#f7f7f7)">
      <svg class="a" style="left:9px;top:6px" width="18" height="18" viewBox="0 0 18 18"><rect x="1" y="2.5" width="15.5" height="14" rx="2" fill="none" stroke="#555" stroke-width="1.1"/><line x1="1" y1="6" x2="16.5" y2="6" stroke="#555" stroke-width="1"/><line x1="4.5" y1="1" x2="4.5" y2="3.5" stroke="#555"/><line x1="13" y1="1" x2="13" y2="3.5" stroke="#555"/><g fill="#555"><rect x="4" y="9" width="2" height="2"/><rect x="7.7" y="9" width="2" height="2"/><rect x="11.5" y="9" width="2" height="2"/><rect x="4" y="12.3" width="2" height="2"/><rect x="7.7" y="12.3" width="2" height="2"/><rect x="11.5" y="12.3" width="2" height="2"/></g></svg>
      <div class="t" style="left:30.5px;top:5.5px;font-size:14.4px;color:#333;letter-spacing:0.45px">04/01/2022 – 04/30/2022</div>
      <div class="a" style="left:210px;top:13px;width:0;height:0;border-left:3.5px solid transparent;border-right:3.5px solid transparent;border-top:4px solid #444"></div>
    </div>
  </div>
</div>
</body></html>
